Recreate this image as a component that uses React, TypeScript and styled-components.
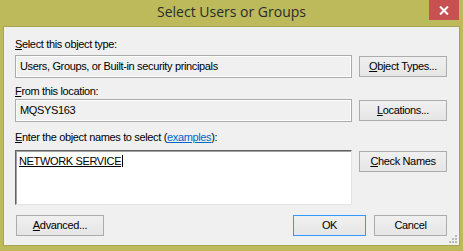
import React from "react";
import styled, { createGlobalStyle } from "styled-components";

const Global = createGlobalStyle`
  html, body { margin: 0; padding: 0; background: #BDBA5C; }
  * { box-sizing: border-box; }
`;

const Window = styled.div`
  width: 463px;
  height: 251px;
  background: #BDBA5C;
  display: flex;
  flex-direction: column;
  padding: 0 3px 5px 3px;
  font-family: "Liberation Sans", Arial, sans-serif;
`;

const TitleBar = styled.div`
  height: 26px;
  margin: 0 -3px;
  display: grid;
  grid-template-columns: 1fr auto 1fr;
  align-items: start;
`;

const Title = styled.div`
  grid-column: 2;
  font-family: "Open Sans", "Noto Sans", sans-serif;
  font-size: 14px;
  line-height: 24px;
  color: #2B2B2B;
`;

const CloseButton = styled.div`
  grid-column: 3;
  justify-self: end;
  margin-right: 4px;
  width: 30px;
  height: 20px;
  background: #C75050;
  display: flex;
  align-items: center;
  justify-content: center;
`;

const Client = styled.div`
  flex: 1;
  position: relative;
  background: #F0F0F0;
  border: 1px solid #A7A452;
  padding: 9px 12px 0 11px;
  display: flex;
  flex-direction: column;
  font-size: 11px;
  letter-spacing: -0.35px;
  color: #000;
`;

const Label = styled.div<{ $mt?: number }>`
  height: 17px;
  line-height: 17px;
  margin-top: ${(p) => p.$mt ?? 0}px;
`;

const Row = styled.div<{ $mt?: number }>`
  display: grid;
  grid-template-columns: 337px 88px;
  column-gap: 7px;
  align-items: start;
  margin-top: ${(p) => p.$mt ?? 0}px;
`;

const ReadBox = styled.div`
  height: 23px;
  border: 1px solid #ABABAB;
  box-shadow: inset 1px 1px 0 #FFFFFF, inset -1px -1px 0 #FFFFFF;
  background: #F0F0F0;
  padding: 0 0 0 4px;
  line-height: 21px;
`;

const NameArea = styled.div`
  height: 55px;
  background: #FFFFFF;
  border-style: solid;
  border-width: 1px;
  border-color: #646464 #E3E3E3 #E3E3E3 #646464;
  box-shadow: inset 1px 1px 0 #A0A0A0;
  padding: 3px 0 0 3px;
  line-height: 14px;
`;

const Resolved = styled.span`
  text-decoration: underline;
  border-right: 1px solid #000;
  padding-right: 1px;
`;

const Button = styled.div<{ $w?: number; $focus?: boolean; $ml?: number }>`
  width: ${(p) => p.$w ?? 88}px;
  height: 21px;
  margin-top: 1px;
  margin-left: ${(p) => p.$ml ?? 0}px;
  border: 1px solid ${(p) => (p.$focus ? "#3399FF" : "#ACACAC")};
  background: linear-gradient(#F0F0F0, #E5E5E5);
  display: flex;
  align-items: center;
  justify-content: center;
  line-height: 19px;
`;

const Link = styled.span`
  color: #0066CC;
  text-decoration: underline;
`;

const Footer = styled.div`
  display: flex;
  align-items: center;
  margin-top: 9px;
  padding-left: 1px;
`;

const Spacer = styled.div`
  flex: 1;
`;

const Grip = styled.svg`
  position: absolute;
  right: 1px;
  bottom: 1px;
`;

export default function App() {
  return (
    <>
      <Global />
      <Window>
        <TitleBar>
          <Title>Select Users or Groups</Title>
          <CloseButton>
            <svg width="10" height="9" viewBox="0 0 10 9">
              <path d="M1 0.5 L9 8.5 M9 0.5 L1 8.5" stroke="#FFFFFF" strokeWidth="2" />
            </svg>
          </CloseButton>
        </TitleBar>
        <Client>
          <Label>
            <u>S</u>elect this object type:
          </Label>
          <Row $mt={2}>
            <ReadBox>Users, Groups, or Built-in security principals</ReadBox>
            <Button>
              <span>
                <u>O</u>bject Types...
              </span>
            </Button>
          </Row>
          <Label $mt={5}>
            <u>F</u>rom this location:
          </Label>
          <Row $mt={-1}>
            <ReadBox>MQSYS163</ReadBox>
            <Button>
              <span>
                <u>L</u>ocations...
              </span>
            </Button>
          </Row>
          <Label $mt={7}>
            <u>E</u>nter the object names to select (<Link>examples</Link>):
          </Label>
          <Row $mt={4}>
            <NameArea>
              <Resolved>NETWORK SERVICE</Resolved>
            </NameArea>
            <Button>
              <span>
                <u>C</u>heck Names
              </span>
            </Button>
          </Row>
          <Footer>
            <Button>
              <span>
                <u>A</u>dvanced...
              </span>
            </Button>
            <Spacer />
            <Button $w={73} $focus>
              OK
            </Button>
            <Button $w={73} $ml={8}>
              Cancel
            </Button>
          </Footer>
          <Grip width="10" height="10" viewBox="0 0 10 10">
            <g fill="#B8B8B8">
              <rect x="7" y="1" width="2" height="2" />
              <rect x="4" y="4" width="2" height="2" />
              <rect x="7" y="4" width="2" height="2" />
              <rect x="1" y="7" width="2" height="2" />
              <rect x="4" y="7" width="2" height="2" />
              <rect x="7" y="7" width="2" height="2" />
            </g>
          </Grip>
        </Client>
      </Window>
    </>
  );
}
